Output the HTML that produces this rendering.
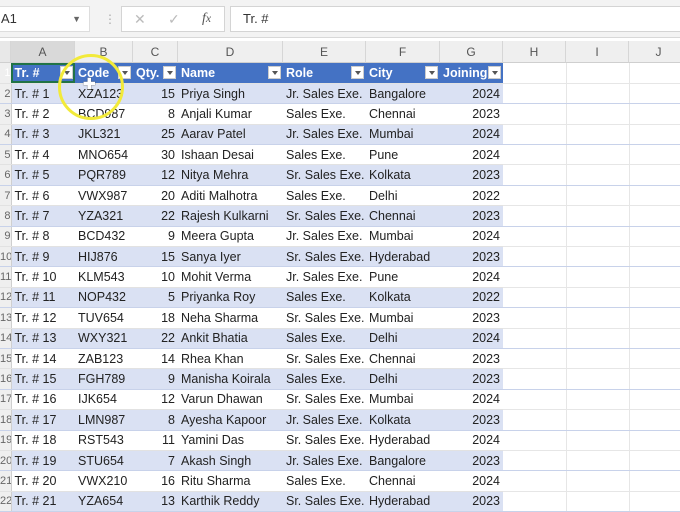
<!DOCTYPE html>
<html><head><meta charset="utf-8"><style>
*{margin:0;padding:0;box-sizing:border-box}
body{width:680px;height:499px;overflow:hidden;background:#fff;font-family:"Liberation Sans",sans-serif;position:relative}
.top{position:absolute;left:0;top:0;width:680px;height:38px;background:#f3f3f3;border-bottom:1px solid #d8d8d8}
.box{position:absolute;top:6px;height:26px;background:#fff;border:1px solid #d4d4d4;font-size:13px;color:#333;line-height:24px}
.ch{position:absolute;top:41px;height:22px;background:#efefef;border-bottom:1px solid #cfcfcf;border-right:1px solid #d6d6d6;font-size:12px;color:#555;text-align:center;line-height:22px}
table{position:absolute;left:0;top:63px;border-collapse:collapse;table-layout:fixed;width:689px}
td{height:20.4px;font-size:12.5px;color:#222;padding:0 3px;white-space:nowrap;overflow:hidden;border-bottom:1px solid #e2e2e2}
tr.b td{background:#dae1f3;border-bottom:1px solid #c8d2ea}
tr.h td{background:#4472c4;color:#fff;font-weight:bold;position:relative}
td.r{text-align:right}
td.rn{background:#efefef!important;color:#666;font-weight:normal!important;font-size:11px;padding:0;text-align:right;border-right:1px solid #cfcfcf}
td.x{background:#fff!important;border-bottom:1px solid #e6e6e6;border-right:1px solid #e6e6e6}
.dd{position:absolute;right:2px;top:3px;width:13px;height:13px;background:#fff;border:1px solid #ccc}
.dd:after{content:"";position:absolute;left:3px;top:4px;border-left:3px solid transparent;border-right:3px solid transparent;border-top:4px solid #555}
</style></head><body>
<div class="top"></div>
<div class="box" style="left:-2px;width:92px;padding-left:2px;border-color:#ddd">A1<span style="position:absolute;right:8px;top:0;font-size:9px;color:#666">▼</span></div>
<div style="position:absolute;left:104px;top:12px;color:#aaa;font-size:12px">⋮</div>
<div class="box" style="left:121px;width:104px;color:#bbb;font-size:14px"><span style="position:absolute;left:12px">✕</span><span style="position:absolute;left:46px">✓</span><span style="position:absolute;left:80px;color:#555;font-style:italic;font-family:'Liberation Serif',serif">f<small>x</small></span></div>
<div class="box" style="left:230px;width:460px;padding-left:12px">Tr. #</div>
<div class="ch" style="left:0;width:11px;background:#e8e8e8"></div>
<div class="ch" style="left:11px;width:64px;background:#d9d9d9">A</div>
<div class="ch" style="left:75px;width:58px">B</div>
<div class="ch" style="left:133px;width:45px">C</div>
<div class="ch" style="left:178px;width:105px">D</div>
<div class="ch" style="left:283px;width:83px">E</div>
<div class="ch" style="left:366px;width:74px">F</div>
<div class="ch" style="left:440px;width:63px">G</div>
<div class="ch" style="left:503px;width:63px">H</div>
<div class="ch" style="left:566px;width:63px">I</div>
<div class="ch" style="left:629px;width:60px">J</div>
<table>
<colgroup><col style="width:11px"><col style="width:64px"><col style="width:58px"><col style="width:45px"><col style="width:105px"><col style="width:83px"><col style="width:74px"><col style="width:63px"><col style="width:63px"><col style="width:63px"><col style="width:60px"></colgroup>
<tr class="h"><td class="rn">1</td><td style="outline:2px solid #217346;outline-offset:-2px">Tr. #<span class="dd"></span></td><td>Code<span class="dd"></span></td><td>Qty.<span class="dd"></span></td><td>Name<span class="dd"></span></td><td>Role<span class="dd"></span></td><td>City<span class="dd"></span></td><td>Joining<span class="dd"></span></td><td class="x"></td><td class="x"></td><td class="x"></td></tr>
<tr class="b"><td class="rn">2</td><td>Tr. # 1</td><td>XZA123</td><td class="r">15</td><td>Priya Singh</td><td>Jr. Sales Exe.</td><td>Bangalore</td><td class="r">2024</td><td class="x"></td><td class="x"></td><td class="x"></td></tr>
<tr><td class="rn">3</td><td>Tr. # 2</td><td>BCD987</td><td class="r">8</td><td>Anjali Kumar</td><td>Sales Exe.</td><td>Chennai</td><td class="r">2023</td><td class="x"></td><td class="x"></td><td class="x"></td></tr>
<tr class="b"><td class="rn">4</td><td>Tr. # 3</td><td>JKL321</td><td class="r">25</td><td>Aarav Patel</td><td>Jr. Sales Exe.</td><td>Mumbai</td><td class="r">2024</td><td class="x"></td><td class="x"></td><td class="x"></td></tr>
<tr><td class="rn">5</td><td>Tr. # 4</td><td>MNO654</td><td class="r">30</td><td>Ishaan Desai</td><td>Sales Exe.</td><td>Pune</td><td class="r">2024</td><td class="x"></td><td class="x"></td><td class="x"></td></tr>
<tr class="b"><td class="rn">6</td><td>Tr. # 5</td><td>PQR789</td><td class="r">12</td><td>Nitya Mehra</td><td>Sr. Sales Exe.</td><td>Kolkata</td><td class="r">2023</td><td class="x"></td><td class="x"></td><td class="x"></td></tr>
<tr><td class="rn">7</td><td>Tr. # 6</td><td>VWX987</td><td class="r">20</td><td>Aditi Malhotra</td><td>Sales Exe.</td><td>Delhi</td><td class="r">2022</td><td class="x"></td><td class="x"></td><td class="x"></td></tr>
<tr class="b"><td class="rn">8</td><td>Tr. # 7</td><td>YZA321</td><td class="r">22</td><td>Rajesh Kulkarni</td><td>Sr. Sales Exe.</td><td>Chennai</td><td class="r">2023</td><td class="x"></td><td class="x"></td><td class="x"></td></tr>
<tr><td class="rn">9</td><td>Tr. # 8</td><td>BCD432</td><td class="r">9</td><td>Meera Gupta</td><td>Jr. Sales Exe.</td><td>Mumbai</td><td class="r">2024</td><td class="x"></td><td class="x"></td><td class="x"></td></tr>
<tr class="b"><td class="rn">10</td><td>Tr. # 9</td><td>HIJ876</td><td class="r">15</td><td>Sanya Iyer</td><td>Sr. Sales Exe.</td><td>Hyderabad</td><td class="r">2023</td><td class="x"></td><td class="x"></td><td class="x"></td></tr>
<tr><td class="rn">11</td><td>Tr. # 10</td><td>KLM543</td><td class="r">10</td><td>Mohit Verma</td><td>Jr. Sales Exe.</td><td>Pune</td><td class="r">2024</td><td class="x"></td><td class="x"></td><td class="x"></td></tr>
<tr class="b"><td class="rn">12</td><td>Tr. # 11</td><td>NOP432</td><td class="r">5</td><td>Priyanka Roy</td><td>Sales Exe.</td><td>Kolkata</td><td class="r">2022</td><td class="x"></td><td class="x"></td><td class="x"></td></tr>
<tr><td class="rn">13</td><td>Tr. # 12</td><td>TUV654</td><td class="r">18</td><td>Neha Sharma</td><td>Sr. Sales Exe.</td><td>Mumbai</td><td class="r">2023</td><td class="x"></td><td class="x"></td><td class="x"></td></tr>
<tr class="b"><td class="rn">14</td><td>Tr. # 13</td><td>WXY321</td><td class="r">22</td><td>Ankit Bhatia</td><td>Sales Exe.</td><td>Delhi</td><td class="r">2024</td><td class="x"></td><td class="x"></td><td class="x"></td></tr>
<tr><td class="rn">15</td><td>Tr. # 14</td><td>ZAB123</td><td class="r">14</td><td>Rhea Khan</td><td>Sr. Sales Exe.</td><td>Chennai</td><td class="r">2023</td><td class="x"></td><td class="x"></td><td class="x"></td></tr>
<tr class="b"><td class="rn">16</td><td>Tr. # 15</td><td>FGH789</td><td class="r">9</td><td>Manisha Koirala</td><td>Sales Exe.</td><td>Delhi</td><td class="r">2023</td><td class="x"></td><td class="x"></td><td class="x"></td></tr>
<tr><td class="rn">17</td><td>Tr. # 16</td><td>IJK654</td><td class="r">12</td><td>Varun Dhawan</td><td>Sr. Sales Exe.</td><td>Mumbai</td><td class="r">2024</td><td class="x"></td><td class="x"></td><td class="x"></td></tr>
<tr class="b"><td class="rn">18</td><td>Tr. # 17</td><td>LMN987</td><td class="r">8</td><td>Ayesha Kapoor</td><td>Jr. Sales Exe.</td><td>Kolkata</td><td class="r">2023</td><td class="x"></td><td class="x"></td><td class="x"></td></tr>
<tr><td class="rn">19</td><td>Tr. # 18</td><td>RST543</td><td class="r">11</td><td>Yamini Das</td><td>Sr. Sales Exe.</td><td>Hyderabad</td><td class="r">2024</td><td class="x"></td><td class="x"></td><td class="x"></td></tr>
<tr class="b"><td class="rn">20</td><td>Tr. # 19</td><td>STU654</td><td class="r">7</td><td>Akash Singh</td><td>Jr. Sales Exe.</td><td>Bangalore</td><td class="r">2023</td><td class="x"></td><td class="x"></td><td class="x"></td></tr>
<tr><td class="rn">21</td><td>Tr. # 20</td><td>VWX210</td><td class="r">16</td><td>Ritu Sharma</td><td>Sales Exe.</td><td>Chennai</td><td class="r">2024</td><td class="x"></td><td class="x"></td><td class="x"></td></tr>
<tr class="b"><td class="rn">22</td><td>Tr. # 21</td><td>YZA654</td><td class="r">13</td><td>Karthik Reddy</td><td>Sr. Sales Exe.</td><td>Hyderabad</td><td class="r">2023</td><td class="x"></td><td class="x"></td><td class="x"></td></tr>
</table>
<div style="position:absolute;left:58px;top:54px;width:66px;height:66px;border:3px solid #f2ea3a;border-radius:50%"></div>
<div style="position:absolute;left:83px;top:75px;font-size:15px;color:#fff;font-weight:bold;text-shadow:0 0 1px #000">✚</div>
</body></html>
